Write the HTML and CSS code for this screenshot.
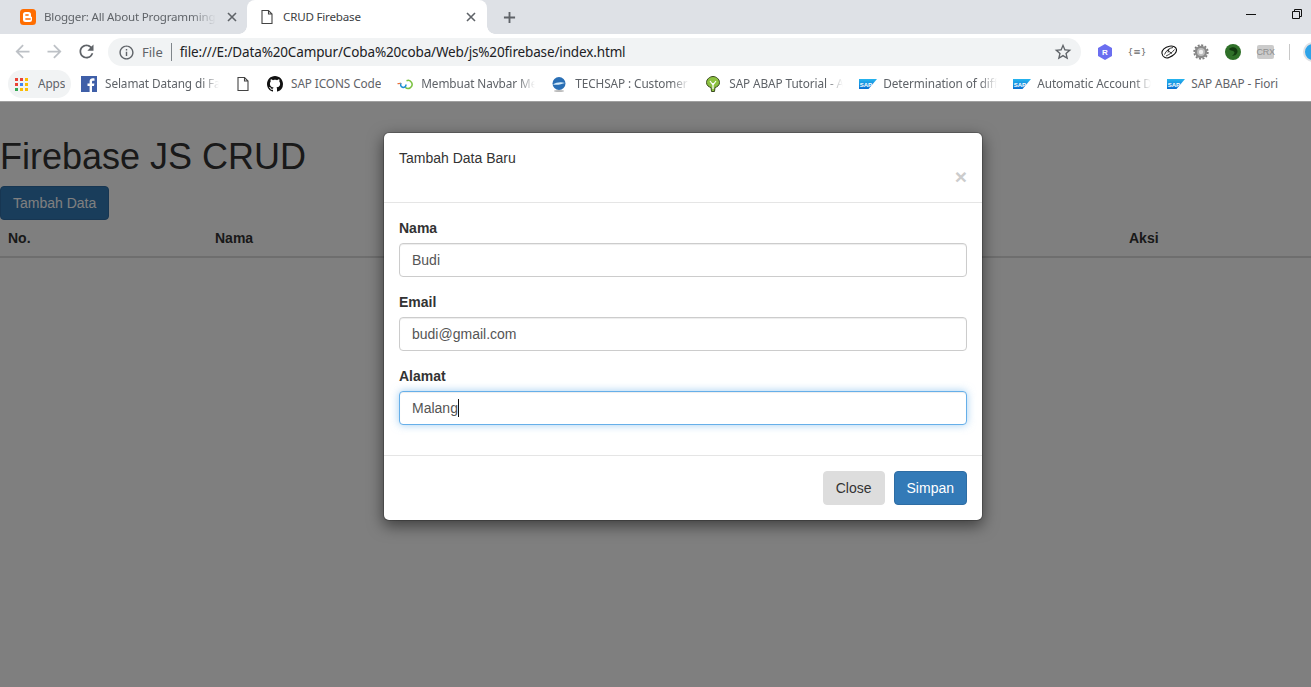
FILE: index.html
```html
<!DOCTYPE html>
<html lang="en">
<head>
<meta charset="utf-8">
<title>CRUD Firebase</title>
<link rel="stylesheet" href="styles.css">
</head>
<body>
<svg class="defs" width="0" height="0" aria-hidden="true">
  <symbol id="doc" viewBox="0 0 16 16"><path d="M3 1.500h6.500L13 5v9.500H3z M9.500 1.500V5H13" fill="#fff" stroke="#444" stroke-width="1.100"/></symbol>
  <symbol id="sap" viewBox="0 0 18 10"><defs><linearGradient id="sapg" x1="0" y1="0" x2="0" y2="1"><stop offset="0" stop-color="#25b5ef"/><stop offset="1" stop-color="#0a6ed1"/></linearGradient></defs><path d="M0 0h18l-8.500 10H0z" fill="url(#sapg)"/><text x="0.800" y="7.600" class="saptxt">SAP</text></symbol>
  <symbol id="x" viewBox="0 0 10 10"><path d="M1 1l8 8M9 1l-8 8" stroke="#5f6368" stroke-width="1.600" fill="none"/></symbol>
</svg>
<div class="browser">
  <div class="tabstrip">
    <div class="tab">
      <svg class="ico16" viewBox="0 0 16 16"><rect width="16" height="16" rx="3.500" fill="#ff6d00"/><path d="M5.500 3h3A2.500 2.500 0 0 1 11 5.500V7a1 1 0 0 0 1 1v2.500A2.500 2.500 0 0 1 9.500 13h-4A2.500 2.500 0 0 1 3 10.500v-5A2.500 2.500 0 0 1 5.500 3z" fill="#fff"/><path d="M5.800 6h2.400M5.800 10h4.400" stroke="#ff6d00" stroke-width="1.300" stroke-linecap="round"/></svg>
      <span class="tabtitle fade">Blogger: All About Programming</span>
      <svg class="tabx"><use href="#x"/></svg>
    </div>
    <div class="tab active">
      <svg class="ico16"><use href="#doc"/></svg>
      <span class="tabtitle">CRUD Firebase</span>
      <svg class="tabx"><use href="#x"/></svg>
    </div>
    <svg class="newtab" viewBox="0 0 14 14"><path d="M7 1v12M1 7h12" stroke="#5f6368" stroke-width="2"/></svg>
    <div class="winctl">
      <svg class="winbtn" viewBox="0 0 10 10"><path d="M0 5.500h10" stroke="#111" stroke-width="1"/></svg>
      <svg class="winbtn" viewBox="0 0 10 10"><path d="M.5 2.500h7v7h-7zM2.500 2.500v-2h7v7h-2" fill="none" stroke="#111" stroke-width="1"/></svg>
    </div>
  </div>
  <div class="toolbar">
    <svg class="navbtn" viewBox="0 0 24 24"><path fill="#bdc1c6" d="M20 11H7.830l5.590-5.590L12 4l-8 8 8 8 1.410-1.410L7.830 13H20v-2z"/></svg>
    <svg class="navbtn" viewBox="0 0 24 24"><path fill="#bdc1c6" d="M4 11h12.170l-5.590-5.590L12 4l8 8-8 8-1.410-1.410L16.170 13H4v-2z"/></svg>
    <svg class="navbtn" viewBox="0 0 24 24"><path fill="#5f6368" d="M17.650 6.350A7.958 7.958 0 0 0 12 4c-4.420 0-7.990 3.580-7.990 8s3.570 8 7.990 8c3.730 0 6.840-2.550 7.730-6h-2.080A5.990 5.990 0 0 1 12 18c-3.310 0-6-2.690-6-6s2.690-6 6-6c1.660 0 3.140.69 4.220 1.780L13 11h7V4l-2.350 2.350z"/></svg>
    <div class="omnibox">
      <svg class="info" viewBox="0 0 24 24"><path fill="#5f6368" d="M11 7h2v2h-2zm0 4h2v6h-2zm1-9C6.480 2 2 6.480 2 12s4.480 10 10 10 10-4.480 10-10S17.520 2 12 2zm0 18c-4.410 0-8-3.590-8-8s3.590-8 8-8 8 3.590 8 8-3.590 8-8 8z"/></svg>
      <span class="scheme">File</span>
      <span class="sep"></span>
      <span class="url">file:///E:/Data%20Campur/Coba%20coba/Web/js%20firebase/index.html</span>
      <svg class="star" viewBox="0 0 24 24"><path fill="#5f6368" d="M22 9.240l-7.190-.62L12 2 9.190 8.630 2 9.240l5.460 4.730L5.820 21 12 17.270 18.180 21l-1.630-7.030L22 9.240zM12 15.400l-3.760 2.270 1-4.280-3.320-2.880 4.380-.38L12 6.100l1.710 4.040 4.380.38-3.320 2.880 1 4.280L12 15.400z"/></svg>
    </div>
    <div class="exts">
      <span class="ext"><svg class="ico16" viewBox="0 0 16 16"><path d="M8 0l7 4v8l-7 4-7-4V4z" fill="#6b6ef0"/><text x="8" y="11" class="exttxt-r">R</text></svg></span>
      <span class="ext"><span class="jsonext">{≡}</span></span>
      <span class="ext"><svg class="ico16" viewBox="0 0 16 16"><path d="M1 9.500C.5 6 4 3 8.500 2.200 12 1.600 15.500 3 15.500 6c0 3-3 5.500-7.500 7.500C5 14.800 1.500 13 1 9.500z" fill="#fff" stroke="#111" stroke-width="1.100"/><path d="M3.500 10.500C5 7 8 4 12 3.500M5 12c3-1.500 6-3 8.500-6.500M6 6l5 3.500M8 4.800L7 8.500" stroke="#222" stroke-width=".9" fill="none"/></svg></span>
      <span class="ext"><svg class="ico16" viewBox="0 0 16 16"><circle cx="8" cy="8" r="6.800" fill="none" stroke="#7d7d7d" stroke-width="1.800" stroke-dasharray="2 1.560"/><circle cx="8" cy="8" r="6.200" fill="#8a8a8a"/><circle cx="8" cy="8" r="4" fill="#bdbdbd"/><circle cx="8" cy="8" r="2.200" fill="#efefef"/></svg></span>
      <span class="ext"><svg class="ico16" viewBox="0 0 16 16"><circle cx="8" cy="8" r="8" fill="#2f7029"/><path d="M4 5c3-3 8-2 8.500 2 .3 3-3 5.500-5.500 4.500 2-1 3.500-3 1.500-4.300C7.300 6.500 5 6.800 4 5z" fill="#123a10"/></svg></span>
      <span class="ext"><span class="crx">CRX</span></span>
    </div>
    <span class="extsep"></span>
    <span class="avatar"></span>
  </div>
  <div class="bookmarks">
    <div class="apps">
      <span class="appgrid"><i class="c1"></i><i class="c1"></i><i class="c3"></i><i class="c1"></i><i class="c4"></i><i class="c3"></i><i class="c2"></i><i class="c3"></i><i class="c3"></i></span>
      <span class="bmtext">Apps</span>
    </div>
    <div class="bm">
      <svg class="ico16" viewBox="0 0 16 16"><rect width="16" height="16" fill="#3f5fa8"/><path d="M11 16V10h2l.4-2.500H11V6c0-.8.300-1.300 1.300-1.300h1.200V2.400C13.200 2.300 12.500 2.300 11.800 2.300 9.900 2.300 8.600 3.400 8.600 5.600v1.900H6.500V10h2.100v6z" fill="#fff"/></svg>
      <span class="bmtext fade">Selamat Datang di Facebook</span>
    </div>
    <div class="bm"><svg class="ico16"><use href="#doc"/></svg></div>
    <div class="bm">
      <svg class="ico16" viewBox="0 0 16 16"><path fill="#111" d="M8 0C3.580 0 0 3.580 0 8c0 3.540 2.290 6.530 5.470 7.590.4.07.55-.17.55-.38 0-.19-.01-.82-.01-1.490-2.010.37-2.530-.49-2.690-.94-.09-.23-.48-.94-.82-1.130-.28-.15-.68-.52-.01-.53.63-.01 1.080.58 1.230.82.72 1.210 1.870.87 2.330.66.07-.52.28-.87.51-1.070-1.780-.2-3.640-.89-3.640-3.950 0-.87.31-1.590.82-2.150-.08-.2-.36-1.020.08-2.120 0 0 .67-.21 2.200.82.64-.18 1.320-.27 2-.27.68 0 1.360.09 2 .27 1.530-1.040 2.200-.82 2.200-.82.44 1.100.16 1.920.08 2.120.51.56.82 1.270.82 2.150 0 3.070-1.870 3.750-3.650 3.950.29.25.54.73.54 1.480 0 1.070-.01 1.930-.01 2.200 0 .21.15.46.55.38A8.013 8.013 0 0 0 16 8c0-4.420-3.580-8-8-8z"/></svg>
      <span class="bmtext">SAP ICONS Code</span>
    </div>
    <div class="bm">
      <svg class="ico16" viewBox="0 0 16 16"><path d="M9.500 4.700a4 4 0 1 1-1.300 6.500" fill="none" stroke="#7cc242" stroke-width="1.500"/><path d="M9 8.500a2.700 2.700 0 1 1-4.800-1.500" fill="none" stroke="#1c8fd6" stroke-width="1.500"/><path d="M.5 7.500c1 .3 2 .2 3-.5" stroke="#e9703a" stroke-width="1.300" fill="none"/></svg>
      <span class="bmtext fade">Membuat Navbar Menu Dropdown</span>
    </div>
    <div class="bm">
      <svg class="ico16" viewBox="0 0 16 16"><circle cx="8" cy="7.500" r="6.500" fill="#2a6fb5"/><path d="M2 8.500c3-2 8-3 12-1.500C11 8 6 9.500 2 8.500z" fill="#d6ecfa"/><ellipse cx="8" cy="15" rx="5" ry="1" fill="#bbb"/></svg>
      <span class="bmtext fade">TECHSAP : Customer Exits</span>
    </div>
    <div class="bm">
      <svg class="ico16" viewBox="0 0 16 16"><path d="M8 .5c3 0 6.500 2.500 6.500 6 0 3-2.500 4.500-4.500 5l-.5 4h-3l-.5-4c-2-.5-4.500-2-4.500-5 0-3.500 3.500-6 6.500-6z" fill="#8cc13f" stroke="#3a4a20"/><path d="M8 13V7M8 9L5 5M8 9l3-4" stroke="#fff" stroke-width="1.200" fill="none"/></svg>
      <span class="bmtext fade">SAP ABAP Tutorial - ABAP Programming</span>
    </div>
    <div class="bm"><svg class="icosap"><use href="#sap"/></svg><span class="bmtext fade">Determination of different things</span></div>
    <div class="bm"><svg class="icosap"><use href="#sap"/></svg><span class="bmtext fade">Automatic Account Determination</span></div>
    <div class="bm"><svg class="icosap"><use href="#sap"/></svg><span class="bmtext">SAP ABAP - Fiori</span></div>
  </div>
  <main class="page">
    <h1 class="title">Firebase JS CRUD</h1>
    <button class="btn btn-primary" type="button">Tambah Data</button>
    <table class="table">
      <thead>
        <tr>
          <th class="col-no">No.</th>
          <th class="col-nama">Nama</th>
          <th class="col-email">Email</th>
          <th class="col-alamat">Alamat</th>
          <th>Aksi</th>
        </tr>
      </thead>
    </table>
    <div class="backdrop"></div>
    <div class="modal">
      <div class="modal-header">
        <h5 class="modal-title">Tambah Data Baru</h5>
        <div class="close">×</div>
      </div>
      <form class="modal-body">
        <div class="form-group">
          <label class="form-label">Nama</label>
          <input class="form-control" type="text" value="Budi">
        </div>
        <div class="form-group">
          <label class="form-label">Email</label>
          <input class="form-control" type="text" value="budi@gmail.com">
        </div>
        <div class="form-group">
          <label class="form-label">Alamat</label>
          <div class="field">
            <input class="form-control focused" type="text" value="Malang">
            <span class="caret"></span>
          </div>
        </div>
      </form>
      <div class="modal-footer">
        <button class="btn btn-default" type="button">Close</button>
        <button class="btn btn-primary" type="button">Simpan</button>
      </div>
    </div>
  </main>
</div>
</body>
</html>
```
FILE: styles.css
```css
* { box-sizing: border-box; }
html, body { margin: 0; height: 100%; overflow: hidden; }
body { font-family: "Liberation Sans", Arial, sans-serif; font-size: 14px; line-height: 20px; color: #333; background: #fff; }
.defs { position: absolute; }
.browser { display: flex; flex-direction: column; height: 100%; }
.ico16 { width: 16px; height: 16px; flex: none; display: block; }

/* Tab strip */
.tabstrip { height: 34px; flex: none; background: #dee1e6; display: flex; align-items: stretch; padding-left: 8px; }
.tab { position: relative; display: flex; align-items: center; padding: 0 8px 0 12px; height: 34px; font-family: "Noto Sans", sans-serif; font-size: 11.600px; letter-spacing: -.2px; color: #5f6368; }
.tab:first-child { width: 239px; }
.tab.active { width: 240px; padding-right: 9px; background: #fff; color: #3c4043; border-radius: 8px 8px 0 0; }
.tab.active::before, .tab.active::after { content: ""; position: absolute; bottom: 0; width: 8px; height: 8px; }
.tab.active::before { left: -8px; background: radial-gradient(circle at 0 0, transparent 7.500px, #fff 8px); }
.tab.active::after { right: -8px; background: radial-gradient(circle at 100% 0, transparent 7.500px, #fff 8px); }
.tabtitle { flex: 1; margin-left: 8px; white-space: nowrap; overflow: hidden; min-width: 0; }
.fade { -webkit-mask-image: linear-gradient(90deg, #000 85%, transparent); mask-image: linear-gradient(90deg, #000 85%, transparent); }
.tabx { width: 10px; height: 10px; flex: none; margin: 0 2px 0 11px; }
.newtab { width: 13px; height: 13px; align-self: center; margin-left: 16px; }
.winctl { margin-left: auto; display: flex; align-items: flex-start; gap: 36px; padding: 9px 9px 0 0; }
.winbtn { width: 10px; height: 10px; display: block; }

/* Toolbar */
.toolbar { height: 33px; flex: none; background: #fff; display: flex; align-items: center; padding-left: 6px; overflow: hidden; }
.navbtn { width: 21px; height: 21px; flex: none; margin: 2px 5.500px 0; }
.omnibox { width: 973px; height: 28px; flex: none; margin: 3px 0 0 6px; background: #f1f3f4; border-radius: 14px; display: flex; align-items: center; padding: 0 8px 0 10px; font-family: "Noto Sans", sans-serif; }
.info { width: 17px; height: 17px; flex: none; }
.scheme { margin-left: 7px; font-size: 13px; color: #5f6368; }
.sep { width: 1px; height: 18px; background: #80868b; margin: 0 8px; }
.url { flex: 1; font-size: 13.500px; letter-spacing: -.14px; color: #202124; white-space: nowrap; }
.star { width: 20px; height: 20px; flex: none; }
.exts { display: flex; margin: 3px 0 0 8px; }
.ext { width: 32px; height: 28px; display: flex; align-items: center; justify-content: center; }
.exttxt-r { font-family: "Liberation Sans", sans-serif; font-weight: 700; font-size: 8px; fill: #fff; text-anchor: middle; }
.jsonext { font-family: "DejaVu Sans", sans-serif; font-size: 9px; line-height: 12px; color: #666; white-space: nowrap; }
.crx { width: 17px; height: 14px; background: #cbcbcb; color: #8f8f8f; font-family: "Liberation Sans", sans-serif; font-size: 9px; line-height: 14px; border-radius: 2px; text-align: center; letter-spacing: -.2px; white-space: nowrap; }
.extsep { width: 1px; height: 16px; margin: 3px 0 0 8px; background: #c8c8c8; flex: none; }
.avatar { width: 20px; height: 20px; margin: 3px 0 0 13px; border-radius: 50%; background: #2ea3e8; border: 2px solid #dfe1e5; flex: none; }

/* Bookmarks */
.bookmarks { height: 34px; flex: none; background: #fff; display: flex; align-items: center; padding-left: 8px; font-family: "Noto Sans", sans-serif; font-size: 11.800px; letter-spacing: -.1px; color: #5f6368; overflow: hidden; }
.apps { width: 63px; height: 28px; background: #f1f3f4; border-radius: 14px; display: flex; align-items: center; gap: 10px; padding-left: 7px; margin-right: 2px; flex: none; }
.appgrid { width: 13px; height: 13px; display: grid; grid-template-columns: repeat(3, 3px); grid-auto-rows: 3px; gap: 2px; }
.appgrid i { display: block; }
.c1 { background: #ea4335; } .c2 { background: #34a853; } .c3 { background: #fbbc05; } .c4 { background: #4285f4; }
.bm { display: flex; align-items: center; gap: 8px; padding: 0 8px; flex: none; height: 28px; }
.bmtext { max-width: 114px; padding-bottom: 2px; white-space: nowrap; overflow: hidden; }
.icosap { width: 18px; height: 10px; flex: none; margin-right: -2px; }
.saptxt { font-family: "Liberation Sans", sans-serif; font-weight: 700; font-size: 6px; fill: #fff; }

/* Page */
.page { position: relative; flex: 1; min-height: 0; background: #fff; padding-top: 16px; overflow: hidden; }
.title { margin: 20px 0 9px; font-size: 36px; font-weight: 500; line-height: 40px; color: #333; }
.btn { display: inline-block; height: 34px; padding: 6px 12px; border: 1px solid transparent; border-radius: 4px; font-family: inherit; font-size: 14px; line-height: 20px; white-space: nowrap; }
.btn-primary { background: #337ab7; border-color: #2e6da4; color: #fff; }
.btn-default { background: #ddd; border-color: #ddd; color: #333; }
.page > .btn { display: block; }
.table { width: 100%; border-collapse: collapse; table-layout: fixed; }
.table th { padding: 8px; text-align: left; font-weight: 700; line-height: 20px; border-bottom: 2px solid #ddd; }
.col-no { width: 207px; }
.col-nama { width: 300px; }
.col-email { width: 300px; }
.col-alamat { width: 314px; }
.backdrop { position: absolute; inset: 0; background: rgba(0, 0, 0, .5); border-top: 1px solid #a0a0a0; }
.modal { position: absolute; top: 31px; left: 383px; width: 600px; background: #fff; border: 1px solid rgba(0, 0, 0, .2); border-radius: 6px; background-clip: padding-box; box-shadow: 0 5px 15px rgba(0, 0, 0, .5); }
.modal-header { padding: 15px 15px 14px; border-bottom: 1px solid #e5e5e5; height: 70px; }
.modal-title { margin: 0; font-size: 14px; font-weight: 400; line-height: 20px; }
.close { margin-top: -2px; text-align: right; font-size: 21px; font-weight: 700; line-height: 21px; color: #ccc; }
.modal-body { padding: 15px; }
.form-group { margin-bottom: 15px; }
.form-label { display: block; margin-bottom: 5px; font-weight: 700; }
.form-control { display: block; width: 100%; height: 34px; padding: 6px 12px; font-family: inherit; font-size: 14px; line-height: 20px; color: #555; background: #fff; border: 1px solid #ccc; border-radius: 4px; box-shadow: inset 0 1px 1px rgba(0, 0, 0, .075); outline: 0; }
.form-control.focused { border-color: #66afe9; box-shadow: inset 0 1px 1px rgba(0, 0, 0, .075), 0 0 8px rgba(102, 175, 233, .6); }
.field { position: relative; }
.caret { position: absolute; left: 59px; top: 8px; width: 1px; height: 18px; background: #111; }
.modal-footer { display: flex; justify-content: flex-end; gap: 9px; padding: 15px; border-top: 1px solid #e5e5e5; }
```
